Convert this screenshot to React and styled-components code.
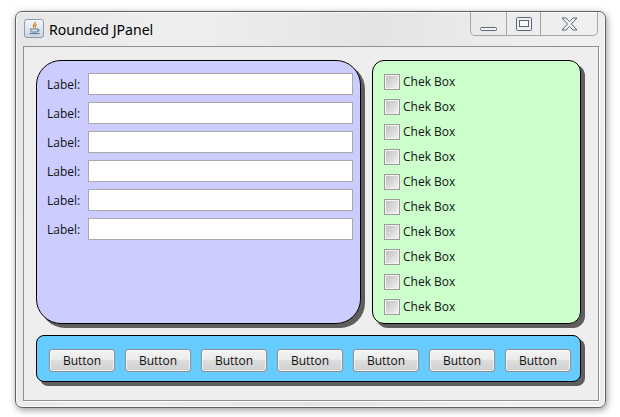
import React from "react";
import styled, { createGlobalStyle } from "styled-components";

const Global = createGlobalStyle`
  html, body { margin: 0; padding: 0; background: #fff; }
  body { width: 620px; height: 417px; overflow: hidden; font-family: "DejaVu Sans", sans-serif; }
`;
const Page = styled.div`
  width: 620px; height: 417px; box-sizing: border-box; padding: 11px 14px 9px 15px;
`;
const Win = styled.div`
  width: 591px; height: 397px; box-sizing: border-box;
  border: 1px solid #5f6163; border-radius: 7px;
  background: linear-gradient(100deg, #e6e6e6 0%, #efefef 25%, #e4e4e4 55%, #f0f0f0 85%, #ececec 100%);
  box-shadow: 0 0 0 1px rgba(255,255,255,.7) inset, 1px 2px 7px rgba(0,0,0,.4);
  padding: 0 6px 6px 7px;
  display: flex; flex-direction: column;
`;
const TitleBar = styled.div`
  height: 34px; flex: none; display: flex; align-items: flex-start; position: relative;
`;
const AppIcon = styled.div`
  width: 20px; height: 19px; margin: 7px 0 0 1px; box-sizing: border-box;
  border: 1px solid #8b9cad; border-radius: 3px;
  background: linear-gradient(#f4f7fa, #c9d6e2);
  display: flex; align-items: center; justify-content: center;
`;
const Title = styled.div`
  margin: 8px 0 0 5px; font: 14.1px/20px "Noto Sans", sans-serif; color: #000;
`;
const Controls = styled.div`
  position: absolute; right: 1px; top: 0; height: 24px; width: 128px; box-sizing: border-box;
  display: flex;
  border: 1px solid #a3a6a9; border-top: none; border-radius: 0 0 5px 5px;
`;
const Ctrl = styled.div`
  width: ${p => p.$w}px; flex: none; display: flex; align-items: center; justify-content: center;
  border-left: ${p => p.$sep ? "1px solid #a3a6a9" : "none"};
  box-sizing: border-box;
`;
const Content = styled.div`
  flex: 1; border: 1px solid #8f8f8f; background: #eeeeee;
  box-shadow: 1px 1px 0 #fff;
  padding: 13px 16px 18px 12px;
  display: flex; flex-direction: column; gap: 11px;
`;
const TopRow = styled.div`
  display: flex; gap: 11px; height: 264px; flex: none;
`;
const Rounded = styled.div`
  box-sizing: border-box; border: 1px solid #000;
  background: ${p => p.$bg}; border-radius: ${p => p.$r}px;
  box-shadow: 4px 4px 0 #5e5e5e;
`;
const FormPanel = styled(Rounded)`
  width: 325px; padding: 12px 7px 0 10px; display: flex; flex-direction: column; gap: 7px;
`;
const FormRow = styled.div`
  display: flex; align-items: flex-start; height: 22px; gap: 6px;
`;
const Label = styled.span`
  width: 35px; font: 12px/24px "Open Sans", sans-serif; color: #111; white-space: nowrap;
`;
const Field = styled.div`
  flex: 1; height: 22px; box-sizing: border-box; background: #fff; border: 1px solid #a9a9a9;
`;
const CheckPanel = styled(Rounded)`
  width: 209px; padding: 12px 11px 0; display: flex; flex-direction: column; gap: 8px;
`;
const CheckRow = styled.div`
  display: flex; align-items: center; height: 17px; gap: 3px;
`;
const Box = styled.div`
  width: 16px; height: 16px; box-sizing: border-box; border: 1px solid #9a9a9a;
  background: linear-gradient(135deg, #bdbdbd, #f4f4f4);
  box-shadow: inset 0 0 0 1px #f4f4f4;
`;
const CheckText = styled.span`
  font: 12px/17px "Open Sans", sans-serif; color: #111; white-space: nowrap;
`;
const ButtonBar = styled(Rounded)`
  width: 545px; height: 47px; padding: 13px 12px 0; display: flex; align-items: flex-start; gap: 10px;
`;
const Btn = styled.div`
  width: 66px; height: 23px; box-sizing: border-box; flex: none;
  border: 1px solid #8e8e8e; border-radius: 3px;
  background: linear-gradient(#f3f3f3 0%, #ebebeb 45%, #dddddd 50%, #cfcfcf 100%);
  box-shadow: inset 0 0 0 1px rgba(255,255,255,.7);
  text-align: center; font: 12px/21px "Open Sans", sans-serif; color: #111;
`;

const JavaIcon = () => (
  <svg width="15" height="15" viewBox="0 0 15 15" fill="none">
    <path d="M8 1c1 2-3 3-1.500 5.500M9.500 3.500c-1.500 1-2 2-.8 3.500" stroke="#d9730d" strokeWidth="1.200" />
    <path d="M3.500 8h7.500c0 2-1 3-1.500 3h-4.500c-1 0-1.500-1-1.500-3zM11 8.500c2 0 2 2-.5 2" stroke="#5d7c97" strokeWidth="1" />
    <path d="M2.500 12.500h10" stroke="#5d7c97" strokeWidth="1.200" />
  </svg>
);

export default function App() {
  return (
    <Page>
      <Global />
      <Win>
        <TitleBar>
          <AppIcon><JavaIcon /></AppIcon>
          <Title>Rounded JPanel</Title>
          <Controls>
            <Ctrl $w={35}>
              <svg width="18" height="24" viewBox="0 0 18 24"><rect x="0.500" y="15.500" width="16" height="3" rx="1" fill="#f2f4f7" stroke="#5d6675" /></svg>
            </Ctrl>
            <Ctrl $w={34} $sep>
              <svg width="18" height="14" viewBox="0 0 18 14"><rect x="1.500" y="0.500" width="15" height="13" rx="1" fill="#eef0f3" stroke="#5d6675" /><rect x="4.500" y="3.500" width="9" height="6" fill="#f8f8f8" stroke="#5d6675" /></svg>
            </Ctrl>
            <Ctrl $w={57} $sep>
              <svg width="17" height="14" viewBox="0 0 17 14"><path d="M1 1h4l3.500 3.500L12 1h4l-5.500 6 5.500 6h-4L8.500 9.500 5 13H1l5.500-6z" fill="#f2f3f5" stroke="#5d6675" /></svg>
            </Ctrl>
          </Controls>
        </TitleBar>
        <Content>
          <TopRow>
            <FormPanel $bg="#ccccff" $r={25}>
              {Array.from({ length: 6 }, (_, i) => (
                <FormRow key={i}><Label>Label:</Label><Field /></FormRow>
              ))}
            </FormPanel>
            <CheckPanel $bg="#ccffcc" $r={12}>
              {Array.from({ length: 10 }, (_, i) => (
                <CheckRow key={i}><Box /><CheckText>Chek Box</CheckText></CheckRow>
              ))}
            </CheckPanel>
          </TopRow>
          <ButtonBar $bg="#66ccff" $r={8}>
            {Array.from({ length: 7 }, (_, i) => <Btn key={i}>Button</Btn>)}
          </ButtonBar>
        </Content>
      </Win>
    </Page>
  );
}
